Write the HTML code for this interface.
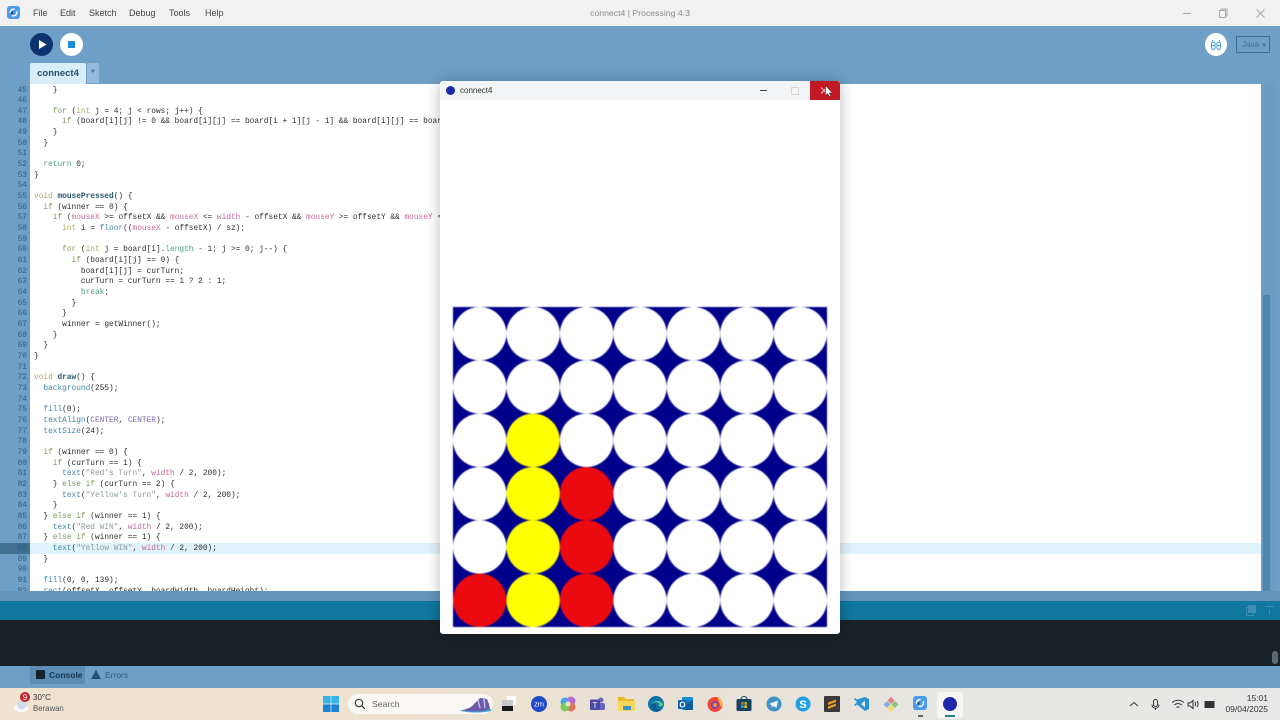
<!DOCTYPE html>
<html><head><meta charset="utf-8">
<style>
html,body{margin:0;padding:0;width:1280px;height:720px;overflow:hidden;background:#6d9fc7;font-family:"Liberation Sans",sans-serif}
.a{position:absolute}
#code{position:absolute;left:0;top:84px;width:440px;height:507px;overflow:hidden;filter:blur(.25px)}
.l{position:absolute;left:34px;height:11px;line-height:11px;white-space:pre;font:7.82px/11px "Liberation Mono",monospace;color:#2e2e2e;width:406px;overflow:hidden}
.n{position:absolute;left:0;width:27px;text-align:right;height:11px;font:7.82px/11px "Liberation Mono",monospace;color:#2d5f86}
b{font-weight:bold;color:#2a5a70}
.k{color:#7f9b5c}.t{color:#b3a56f}.f{color:#3f88a5}.s{color:#8c9a9c}.p{color:#c46a9b}.c{color:#7d6ba6}.r{color:#4fa08c}
.m{position:absolute;top:6px;font-size:9px;line-height:14px;color:#444}
</style></head><body>

<!-- title bar -->
<div class="a" style="left:0;top:0;width:1280px;height:26px;background:#f1f1f1"></div>
<svg class="a" style="left:7px;top:6px" width="13" height="14"><rect width="13" height="13" y="0" rx="3" fill="#4b9be8"/><circle cx="6.500" cy="6.500" r="3.400" fill="none" stroke="#fff" stroke-width="1.400" stroke-dasharray="7 3"/><circle cx="5" cy="7" r="1.200" fill="#123f86"/></svg>
<div class="m" style="left:33px">File</div>
<div class="m" style="left:60px">Edit</div>
<div class="m" style="left:89px">Sketch</div>
<div class="m" style="left:129px">Debug</div>
<div class="m" style="left:169px">Tools</div>
<div class="m" style="left:205px">Help</div>
<div class="a" style="left:540px;width:200px;top:6px;text-align:center;font-size:8.7px;line-height:14px;color:#8b8b8b">connect4 | Processing 4.3</div>
<svg class="a" style="left:1180px;top:5px" width="95" height="16" fill="none" stroke="#a8a8a8" stroke-width="1"><path d="M3 8.500h8"/><rect x="39.500" y="5.500" width="6" height="7"/><path d="M41 5.500v-1.500h6v7h-1.500"/><path d="M76.500 4.500l8 8M84.500 4.500l-8 8"/></svg>

<!-- toolbar -->
<div class="a" style="left:30px;top:33px;width:23px;height:23px;border-radius:50%;background:#0f3270"></div>
<svg class="a" style="left:38.500px;top:40px" width="9" height="9"><path d="M0 0L7.500 4.500L0 9z" fill="#fff"/></svg>
<div class="a" style="left:60px;top:33px;width:23px;height:23px;border-radius:50%;background:#fff"></div>
<div class="a" style="left:68px;top:41px;width:7px;height:7px;background:#2288d8"></div>
<div class="a" style="left:1205px;top:33px;width:22px;height:23px;border-radius:50%;background:#fff"></div>
<svg class="a" style="left:1210px;top:39px" width="12" height="12" fill="none" stroke="#48a5d8" stroke-width="1"><rect x="1.500" y="3" width="3.500" height="7.500" rx="1.700"/><rect x="7" y="3" width="3.500" height="7.500" rx="1.700"/><path d="M3 3L2 1M9 3l1-2M1.500 6.500h3.500M7 6.500h3.500"/></svg>
<div class="a" style="left:1236px;top:36px;width:34px;height:17px;box-sizing:border-box;border:1px solid #3c729f;color:#3c729f;font-size:8px;line-height:15px;padding-left:5px">Java <span style="font-size:6px">▼</span></div>

<!-- tab -->
<div class="a" style="left:30px;top:63px;width:56px;height:21px;background:#d8eefb;border-radius:2px 2px 0 0;font:bold 9.500px/21px 'Liberation Sans',sans-serif;color:#23506f;text-align:center">connect4</div>
<div class="a" style="left:87px;top:63px;width:12px;height:20px;background:#97b9dc;border-radius:2px 2px 0 0;color:#3f6a92;font-size:6px;line-height:19px;text-align:center">▼</div>

<!-- editor -->
<div class="a" style="left:30px;top:84px;width:1231px;height:507px;background:#fff"></div>
<div class="a" style="left:1262px;top:84px;width:13px;height:507px;background:#6a9cc5"></div>
<div class="a" style="left:1263px;top:295px;width:7px;height:296px;background:#4f86af"></div>
<div class="a" style="left:30px;top:543px;width:1231px;height:10.500px;background:#e0f2fa"></div>
<div class="a" style="left:0;top:543px;width:30px;height:10.500px;background:#40708f"></div>

<div id="code">
<div class="n" style="top:0.5px">45</div><div class="l" style="top:0.5px">    }</div>
<div class="n" style="top:11.1px">46</div>
<div class="n" style="top:21.8px">47</div><div class="l" style="top:21.8px">    <span class="k">for</span> (<span class="t">int</span> j = 4; j &lt; rows; j++) {</div>
<div class="n" style="top:32.4px">48</div><div class="l" style="top:32.4px">      <span class="k">if</span> (board[i][j] != 0 &amp;&amp; board[i][j] == board[i + 1][j - 1] &amp;&amp; board[i][j] == board</div>
<div class="n" style="top:43.1px">49</div><div class="l" style="top:43.1px">    }</div>
<div class="n" style="top:53.8px">50</div><div class="l" style="top:53.8px">  }</div>
<div class="n" style="top:64.4px">51</div>
<div class="n" style="top:75.1px">52</div><div class="l" style="top:75.1px">  <span class="r">return</span> 0;</div>
<div class="n" style="top:85.8px">53</div><div class="l" style="top:85.8px">}</div>
<div class="n" style="top:96.4px">54</div>
<div class="n" style="top:107.1px">55</div><div class="l" style="top:107.1px"><span class="t">void</span> <b>mousePressed</b>() {</div>
<div class="n" style="top:117.8px">56</div><div class="l" style="top:117.8px">  <span class="k">if</span> (winner == 0) {</div>
<div class="n" style="top:128.4px">57</div><div class="l" style="top:128.4px">    <span class="k">if</span> (<span class="p">mouseX</span> &gt;= offsetX &amp;&amp; <span class="p">mouseX</span> &lt;= <span class="p">width</span> - offsetX &amp;&amp; <span class="p">mouseY</span> &gt;= offsetY &amp;&amp; <span class="p">mouseY</span> &lt;=</div>
<div class="n" style="top:139.1px">58</div><div class="l" style="top:139.1px">      <span class="t">int</span> i = <span class="f">floor</span>((<span class="p">mouseX</span> - offsetX) / sz);</div>
<div class="n" style="top:149.8px">59</div>
<div class="n" style="top:160.4px">60</div><div class="l" style="top:160.4px">      <span class="k">for</span> (<span class="t">int</span> j = board[i].<span class="r">length</span> - 1; j &gt;= 0; j--) {</div>
<div class="n" style="top:171.1px">61</div><div class="l" style="top:171.1px">        <span class="k">if</span> (board[i][j] == 0) {</div>
<div class="n" style="top:181.8px">62</div><div class="l" style="top:181.8px">          board[i][j] = curTurn;</div>
<div class="n" style="top:192.4px">63</div><div class="l" style="top:192.4px">          curTurn = curTurn == 1 ? 2 : 1;</div>
<div class="n" style="top:203.1px">64</div><div class="l" style="top:203.1px">          <span class="r">break</span>;</div>
<div class="n" style="top:213.8px">65</div><div class="l" style="top:213.8px">        }</div>
<div class="n" style="top:224.4px">66</div><div class="l" style="top:224.4px">      }</div>
<div class="n" style="top:235.1px">67</div><div class="l" style="top:235.1px">      winner = getWinner();</div>
<div class="n" style="top:245.8px">68</div><div class="l" style="top:245.8px">    }</div>
<div class="n" style="top:256.4px">69</div><div class="l" style="top:256.4px">  }</div>
<div class="n" style="top:267.1px">70</div><div class="l" style="top:267.1px">}</div>
<div class="n" style="top:277.8px">71</div>
<div class="n" style="top:288.4px">72</div><div class="l" style="top:288.4px"><span class="t">void</span> <b>draw</b>() {</div>
<div class="n" style="top:299.1px">73</div><div class="l" style="top:299.1px">  <span class="f">background</span>(255);</div>
<div class="n" style="top:309.8px">74</div>
<div class="n" style="top:320.4px">75</div><div class="l" style="top:320.4px">  <span class="f">fill</span>(0);</div>
<div class="n" style="top:331.1px">76</div><div class="l" style="top:331.1px">  <span class="f">textAlign</span>(<span class="c">CENTER</span>, <span class="c">CENTER</span>);</div>
<div class="n" style="top:341.8px">77</div><div class="l" style="top:341.8px">  <span class="f">textSize</span>(24);</div>
<div class="n" style="top:352.4px">78</div>
<div class="n" style="top:363.1px">79</div><div class="l" style="top:363.1px">  <span class="k">if</span> (winner == 0) {</div>
<div class="n" style="top:373.8px">80</div><div class="l" style="top:373.8px">    <span class="k">if</span> (curTurn == 1) {</div>
<div class="n" style="top:384.4px">81</div><div class="l" style="top:384.4px">      <span class="f">text</span>(<span class="s">"Red's Turn"</span>, <span class="p">width</span> / 2, 200);</div>
<div class="n" style="top:395.1px">82</div><div class="l" style="top:395.1px">    } <span class="k">else if</span> (curTurn == 2) {</div>
<div class="n" style="top:405.8px">83</div><div class="l" style="top:405.8px">      <span class="f">text</span>(<span class="s">"Yellow's Turn"</span>, <span class="p">width</span> / 2, 200);</div>
<div class="n" style="top:416.4px">84</div><div class="l" style="top:416.4px">    }</div>
<div class="n" style="top:427.1px">85</div><div class="l" style="top:427.1px">  } <span class="k">else if</span> (winner == 1) {</div>
<div class="n" style="top:437.8px">86</div><div class="l" style="top:437.8px">    <span class="f">text</span>(<span class="s">"Red WIN"</span>, <span class="p">width</span> / 2, 200);</div>
<div class="n" style="top:448.4px">87</div><div class="l" style="top:448.4px">  } <span class="k">else if</span> (winner == 1) {</div>
<div class="n" style="top:459.1px">88</div><div class="l" style="top:459.1px">    <span class="f">text</span>(<span class="s">"Yellow WIN"</span>, <span class="p">width</span> / 2, 200);</div>
<div class="n" style="top:469.8px">89</div><div class="l" style="top:469.8px">  }</div>
<div class="n" style="top:480.4px">90</div>
<div class="n" style="top:491.1px">91</div><div class="l" style="top:491.1px">  <span class="f">fill</span>(0, 0, 139);</div>
<div class="n" style="top:501.8px">92</div><div class="l" style="top:501.8px">  <span class="f">rect</span>(offsetX, offsetY, boardWidth, boardHeight);</div>
</div>

<!-- lower bands -->
<div class="a" style="left:0;top:591px;width:1280px;height:10px;background:#6496bc"></div>
<div class="a" style="left:0;top:601px;width:1280px;height:19px;background:#10779f"></div>
<svg class="a" style="left:1245px;top:604px" width="30" height="13" fill="none" stroke="#3d8fb5" stroke-width="1"><rect x="1.500" y="3.500" width="7" height="8"/><rect x="3.500" y="1.500" width="7" height="7" fill="#3d8fb5"/><path d="M20 2.500h9M24.500 6v5"/></svg>
<div class="a" style="left:0;top:620px;width:1280px;height:46px;background:#1b2227"></div>
<div class="a" style="left:1272px;top:651px;width:6px;height:13px;border-radius:3px;background:#5d6a73"></div>
<div class="a" style="left:0;top:666px;width:1280px;height:22px;background:#6d9fc7"></div>
<div class="a" style="left:30px;top:666px;width:55px;height:18px;background:#5b8db5;border-radius:0 0 3px 3px"></div>
<div class="a" style="left:36px;top:670px;width:9px;height:9px;background:#15212b;border-radius:1px"></div>
<div class="a" style="left:49px;top:668px;font:bold 8.500px/14px 'Liberation Sans',sans-serif;color:#17364f">Console</div>
<svg class="a" style="left:91px;top:670px" width="10" height="9"><path d="M5 0L10 9H0z" fill="#1f4d78"/></svg>
<div class="a" style="left:105px;top:668px;font:8.500px/14px 'Liberation Sans',sans-serif;color:#2a5c88">Errors</div>

<!-- sketch window -->
<div class="a" style="left:440px;top:81px;width:400px;height:553px;background:#fff;border-radius:3px;box-shadow:0 0 14px rgba(0,0,0,.28)"></div>
<div class="a" style="left:440px;top:81px;width:400px;height:19px;background:#f2f4f5;border-radius:3px 3px 0 0"></div>
<div class="a" style="left:446px;top:86px;width:9px;height:9px;border-radius:50%;background:#1c2aa8"></div>
<div class="a" style="left:460px;top:83.500px;font-size:8px;line-height:14px;color:#333">connect4</div>
<div class="a" style="left:760px;top:90px;width:7px;height:1px;background:#444"></div>
<div class="a" style="left:790.500px;top:87px;width:6px;height:6px;border:1px solid #d4d4d4"></div>
<div class="a" style="left:810px;top:81px;width:30px;height:19px;background:#c21a24;border-radius:0 3px 0 0"></div>
<svg class="a" style="left:819px;top:84px" width="14" height="14" fill="none"><path d="M2 3.500l6 6M8 3.500l-6 6" stroke="#f3c5c5" stroke-width="1"/><path d="M6.500 1.500v10l2.300-2 1.500 3.200 1.500-.7-1.500-3h3z" fill="#fff" stroke="#222" stroke-width=".5"/></svg>

<svg class="a" style="left:453px;top:307px;filter:blur(.4px)" width="374" height="320">
<rect width="374" height="320" fill="#00008b"/>
<g fill="#fff">
<circle cx="26.700" cy="26.700" r="26.700"/><circle cx="80.100" cy="26.700" r="26.700"/><circle cx="133.600" cy="26.700" r="26.700"/><circle cx="187" cy="26.700" r="26.700"/><circle cx="240.400" cy="26.700" r="26.700"/><circle cx="293.900" cy="26.700" r="26.700"/><circle cx="347.300" cy="26.700" r="26.700"/>
<circle cx="26.700" cy="80" r="26.700"/><circle cx="80.100" cy="80" r="26.700"/><circle cx="133.600" cy="80" r="26.700"/><circle cx="187" cy="80" r="26.700"/><circle cx="240.400" cy="80" r="26.700"/><circle cx="293.900" cy="80" r="26.700"/><circle cx="347.300" cy="80" r="26.700"/>
<circle cx="26.700" cy="133.300" r="26.700"/><circle cx="133.600" cy="133.300" r="26.700"/><circle cx="187" cy="133.300" r="26.700"/><circle cx="240.400" cy="133.300" r="26.700"/><circle cx="293.900" cy="133.300" r="26.700"/><circle cx="347.300" cy="133.300" r="26.700"/>
<circle cx="26.700" cy="186.700" r="26.700"/><circle cx="187" cy="186.700" r="26.700"/><circle cx="240.400" cy="186.700" r="26.700"/><circle cx="293.900" cy="186.700" r="26.700"/><circle cx="347.300" cy="186.700" r="26.700"/>
<circle cx="26.700" cy="240" r="26.700"/><circle cx="187" cy="240" r="26.700"/><circle cx="240.400" cy="240" r="26.700"/><circle cx="293.900" cy="240" r="26.700"/><circle cx="347.300" cy="240" r="26.700"/>
<circle cx="187" cy="293.300" r="26.700"/><circle cx="240.400" cy="293.300" r="26.700"/><circle cx="293.900" cy="293.300" r="26.700"/><circle cx="347.300" cy="293.300" r="26.700"/>
</g>
<g fill="#ffff00">
<circle cx="80.100" cy="133.300" r="26.700"/><circle cx="80.100" cy="186.700" r="26.700"/><circle cx="80.100" cy="240" r="26.700"/><circle cx="80.100" cy="293.300" r="26.700"/>
</g>
<g fill="#ea0a10">
<circle cx="133.600" cy="186.700" r="26.700"/><circle cx="133.600" cy="240" r="26.700"/><circle cx="133.600" cy="293.300" r="26.700"/><circle cx="26.700" cy="293.300" r="26.700"/>
</g>
</svg>

<!-- taskbar -->
<div class="a" style="left:0;top:688px;width:1280px;height:32px;background:linear-gradient(90deg,#efe2cf 0,#eee2d0 30%,#e8e1d6 55%,#e6e6e3 75%,#e8e8e8 100%)"></div>
<svg class="a" style="left:12px;top:691px" width="20" height="24"><ellipse cx="9" cy="17" rx="7" ry="4" fill="#f6f8fb"/><circle cx="10" cy="14" r="4.500" fill="#cfdcec"/><circle cx="13" cy="6" r="5" fill="#c2222c"/><text x="13" y="9" font-size="8" font-family="Liberation Sans" fill="#fff" text-anchor="middle">9</text></svg>
<div class="a" style="left:33px;top:692px;font-size:8px;line-height:12px;color:#333">30°C</div>
<div class="a" style="left:33px;top:703px;font-size:7.800px;line-height:12px;color:#555">Berawan</div>
<svg class="a" style="left:323px;top:696px" width="16" height="16"><rect width="7.600" height="7.600" fill="#36b4ea"/><rect x="8.400" width="7.600" height="7.600" fill="#36b4ea"/><rect y="8.400" width="7.600" height="7.600" fill="#1a83d6"/><rect x="8.400" y="8.400" width="7.600" height="7.600" fill="#1a83d6"/></svg>
<div class="a" style="left:348px;top:694px;width:145px;height:20px;border-radius:10px;background:#faf8f5"></div>
<svg class="a" style="left:354px;top:698px" width="12" height="12" fill="none" stroke="#333" stroke-width="1.200"><circle cx="5" cy="5" r="3.700"/><path d="M7.800 7.800l3 3"/></svg>
<div class="a" style="left:372px;top:697px;font-size:8.700px;line-height:14px;color:#666">Search</div>
<svg class="a" style="left:460px;top:695px" width="34" height="18"><path d="M2 15c6-1 10-3 13-7l5-5 7 1 2 5 1 5c-5 3-20 4-28 1z" fill="#6b5aa8"/><path d="M1 15c8 2 22 2 30-1l0 2c-8 2-22 2-30 0z" fill="#3ba6dc"/><path d="M18 5l2 8M24 4l1 9" stroke="#c8bde8" stroke-width="1.500"/></svg>

<svg class="a" style="left:500px;top:696px" width="16" height="16"><rect x="7" y="0" width="9" height="9" fill="#fbfbfb"/><rect x="2" y="4" width="11" height="11" fill="#c9c9c9"/><rect x="2" y="10" width="11" height="5" fill="#1b1b1b"/></svg>
<svg class="a" style="left:531px;top:696px" width="16" height="16"><circle cx="8" cy="8" r="8" fill="#2049c8"/><text x="8" y="10.500" font-size="7.500" font-family="Liberation Sans" fill="#fff" text-anchor="middle">zm</text></svg>
<svg class="a" style="left:560px;top:696px" width="16" height="16"><circle cx="5" cy="6" r="4.500" fill="#39a7e8"/><circle cx="11" cy="5" r="4.500" fill="#b26bd8"/><circle cx="11" cy="11" r="4.500" fill="#e8705c"/><circle cx="5" cy="11" r="4.500" fill="#7ccb58"/><circle cx="8" cy="8" r="2.500" fill="#e9e5dd"/></svg>
<svg class="a" style="left:590px;top:696px" width="16" height="16"><circle cx="11" cy="4" r="2.500" fill="#6a64c0"/><rect x="8" y="7" width="7" height="7" rx="2" fill="#6a64c0"/><rect x="0" y="3.500" width="10" height="10.500" rx="1" fill="#4c4aa8"/><text x="5" y="12" font-size="8" font-family="Liberation Sans" fill="#fff" text-anchor="middle">T</text></svg>
<svg class="a" style="left:618px;top:696px" width="17" height="16"><path d="M0 1h6l2 2h8v12H0z" fill="#e8b92a"/><rect y="5" width="17" height="10" fill="#f7d75a"/><rect x="5" y="10" width="8" height="4" fill="#3e92c8"/></svg>
<svg class="a" style="left:648px;top:696px" width="16" height="16"><circle cx="8" cy="8" r="8" fill="#1174a8"/><path d="M3 9c1-4 8-6 12-1 0 3-4 3-5 1 3 0 1-3-2-3-3 0-5 2-5 3z" fill="#5fd09a"/><path d="M8 9c0 3 2 5 5 5-4 3-10 0-10-5 2-2 4-1 5 0z" fill="#0c5c8e"/></svg>
<svg class="a" style="left:678px;top:696px" width="16" height="16"><rect x="4" y="1" width="11" height="13" rx="1" fill="#1b90d8"/><path d="M6 8l9-4v10H6z" fill="#0c5f9c"/><rect x="0" y="4" width="9" height="9" rx="1" fill="#0d62a8"/><text x="4.500" y="11.300" font-size="8" font-weight="bold" font-family="Liberation Sans" fill="#fff" text-anchor="middle">O</text></svg>
<svg class="a" style="left:707px;top:696px" width="16" height="16"><circle cx="8" cy="8.500" r="7.500" fill="#ee4a3c"/><path d="M11 .5c4 3 5 8 3 11-1-4-3-7-3-11z" fill="#f7b733"/><circle cx="8" cy="9" r="3.800" fill="#7a3cc0"/><circle cx="8" cy="9" r="2" fill="#f59c36"/></svg>
<svg class="a" style="left:736px;top:696px" width="16" height="16"><path d="M5 3a3 2.500 0 0 1 6 0" fill="none" stroke="#1d4260" stroke-width="1"/><rect x="0.500" y="3" width="15" height="12" rx="1.500" fill="#174160"/><rect x="5" y="6" width="2.700" height="2.700" fill="#ee5b2b"/><rect x="8.300" y="6" width="2.700" height="2.700" fill="#7dbc2a"/><rect x="5" y="9.300" width="2.700" height="2.700" fill="#1fa3e2"/><rect x="8.300" y="9.300" width="2.700" height="2.700" fill="#f7b81e"/></svg>
<svg class="a" style="left:766px;top:696px" width="16" height="16"><circle cx="8" cy="8" r="7.500" fill="#3e92c6"/><path d="M3 8l9-3.500-1.500 7.500-3-2-1.500 1.500-.5-2.500z" fill="#eef5fa"/></svg>
<svg class="a" style="left:795px;top:696px" width="16" height="16"><circle cx="8" cy="8" r="7.500" fill="#1ba2e4"/><text x="8" y="12" font-size="11" font-weight="bold" font-family="Liberation Sans" fill="#fff" text-anchor="middle">S</text></svg>
<svg class="a" style="left:824px;top:696px" width="16" height="16"><rect width="16" height="16" rx="1" fill="#3a3a38"/><path d="M4 6.500l8-3v2.500l-8 3zM4 10.500l8-3V10l-8 3z" fill="#f29a1f"/></svg>
<svg class="a" style="left:854px;top:696px" width="16" height="16"><path d="M11 1l4 2v10l-4 2-8-6.500-2 1.500-1-1 3-3-3-3 1-1 2 1.500z" fill="#2a93d8"/><path d="M11 4.500L7 8l4 3.500z" fill="#e6e5e0"/></svg>
<svg class="a" style="left:883px;top:696px" width="16" height="16"><path d="M8 1l3.500 3.500L8 8 4.500 4.500z" fill="#e57f7f"/><path d="M4 5l3.500 3.500L4 12 .5 8.500z" fill="#8ab0dc"/><path d="M12 5l3.500 3.500L12 12 8.500 8.500z" fill="#8cc47a"/><path d="M8 9l3.500 3.500L8 16l-3.500-3.500z" fill="#efdc70"/></svg>
<svg class="a" style="left:913px;top:696px" width="15" height="15"><rect width="14" height="14" rx="3" fill="#4b9be8"/><circle cx="7" cy="7" r="3.500" fill="none" stroke="#fff" stroke-width="1.400" stroke-dasharray="7 3"/><circle cx="5.500" cy="7.500" r="1.200" fill="#123f86"/></svg>
<div class="a" style="left:918px;top:715px;width:5px;height:1.500px;background:#666"></div>
<div class="a" style="left:937px;top:692px;width:26px;height:26px;background:#f5f5f4;border-radius:3px"></div>
<div class="a" style="left:943px;top:697px;width:14px;height:14px;border-radius:50%;background:#1c2aa8"></div>
<div class="a" style="left:945px;top:715px;width:10px;height:1.500px;background:#2a7d80"></div>

<svg class="a" style="left:1128px;top:698px" width="90" height="13" fill="none" stroke="#333" stroke-width="1"><path d="M2 8l4-3.500L10 8"/><rect x="25.500" y="1.500" width="4" height="7" rx="2"/><path d="M24 6.500c0 5 7 5 7 0M27.500 10v2"/><path d="M44 4.500c4-3 8-3 12 0M46 7c3-2 5-2 8 0M48.500 9.500c1-.8 2-.8 3 0"/><path d="M60 5h2l3-2.500v8L62 8h-2zM67 4c1 1.500 1 2.500 0 4M69 3c1.500 2 1.500 4 0 6"/><rect x="77" y="3.500" width="9" height="6" fill="#333"/></svg>
<div class="a" style="left:1216px;top:693px;width:52px;text-align:right;font-size:8.500px;line-height:11px;color:#333">15:01</div>
<div class="a" style="left:1206px;top:704px;width:62px;text-align:right;font-size:8.500px;line-height:11px;color:#333">09/04/2025</div>
</body></html>
